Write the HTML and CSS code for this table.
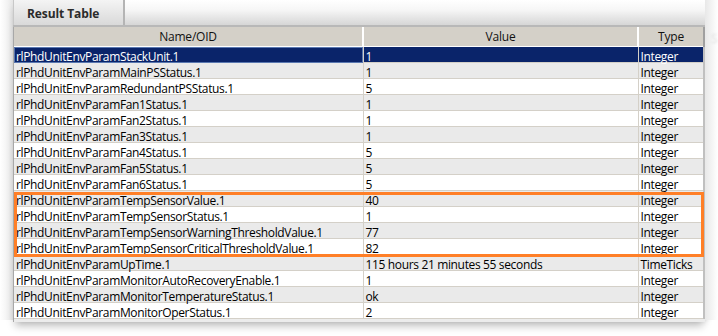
FILE: index.html
```html
<!DOCTYPE html>
<html>
<head>
<meta charset="utf-8">
<link rel="stylesheet" href="styles.css">
</head>
<body>
<div class="stage">
  <div class="left-edge"></div>
  <div class="window">
    <div class="tabbar">
      <div class="tab">Result Table</div>
      <div class="tab-fill"></div>
    </div>
    <div class="grid-wrap">
      <table class="grid">
        <colgroup><col class="c1"><col class="c2"><col class="c3"></colgroup>
        <thead>
          <tr><th>Name/OID</th><th>Value</th><th>Type</th></tr>
        </thead>
        <tbody>
          <tr class="sel"><td class="focus">rlPhdUnitEnvParamStackUnit.1</td><td>1</td><td>Integer</td></tr>
          <tr class="alt"><td>rlPhdUnitEnvParamMainPSStatus.1</td><td>1</td><td>Integer</td></tr>
          <tr><td>rlPhdUnitEnvParamRedundantPSStatus.1</td><td>5</td><td>Integer</td></tr>
          <tr class="alt"><td>rlPhdUnitEnvParamFan1Status.1</td><td>1</td><td>Integer</td></tr>
          <tr><td>rlPhdUnitEnvParamFan2Status.1</td><td>1</td><td>Integer</td></tr>
          <tr class="alt"><td>rlPhdUnitEnvParamFan3Status.1</td><td>1</td><td>Integer</td></tr>
          <tr><td>rlPhdUnitEnvParamFan4Status.1</td><td>5</td><td>Integer</td></tr>
          <tr class="alt"><td>rlPhdUnitEnvParamFan5Status.1</td><td>5</td><td>Integer</td></tr>
          <tr><td>rlPhdUnitEnvParamFan6Status.1</td><td>5</td><td>Integer</td></tr>
          <tr class="alt"><td>rlPhdUnitEnvParamTempSensorValue.1</td><td>40</td><td>Integer</td></tr>
          <tr><td>rlPhdUnitEnvParamTempSensorStatus.1</td><td>1</td><td>Integer</td></tr>
          <tr class="alt"><td>rlPhdUnitEnvParamTempSensorWarningThresholdValue.1</td><td>77</td><td>Integer</td></tr>
          <tr><td>rlPhdUnitEnvParamTempSensorCriticalThresholdValue.1</td><td>82</td><td>Integer</td></tr>
          <tr class="alt"><td>rlPhdUnitEnvParamUpTime.1</td><td>115 hours 21 minutes 55 seconds</td><td>TimeTicks</td></tr>
          <tr><td>rlPhdUnitEnvParamMonitorAutoRecoveryEnable.1</td><td>1</td><td>Integer</td></tr>
          <tr class="alt"><td>rlPhdUnitEnvParamMonitorTemperatureStatus.1</td><td>ok</td><td>Integer</td></tr>
          <tr><td>rlPhdUnitEnvParamMonitorOperStatus.1</td><td>2</td><td>Integer</td></tr>
        </tbody>
      </table>
      <div class="highlight"></div>
    </div>
  </div>
  <div class="right-edge"><span class="ghost">S</span></div>
</div>
</body>
</html>
```
FILE: styles.css
```css
html, body {
  margin: 0;
  padding: 0;
  background: #ffffff;
}
body {
  width: 718px;
  height: 336px;
  overflow: hidden;
  font-family: "Open Sans", "Noto Sans", sans-serif;
}
.stage {
  display: flex;
  width: 718px;
  height: 336px;
}
.left-edge {
  width: 13px;
  height: 320px;
  background: linear-gradient(to right, #ffffff 0%, #f2f2f2 60%, #e6e6e6 100%);
  flex: none;
}
.window {
  width: 692px;
  height: 322px;
  flex: none;
  background: #ececec;
  box-shadow: 0 6px 8px -2px rgba(0,0,0,0.25), 4px 0 6px -2px rgba(0,0,0,0.15);
  display: flex;
  flex-direction: column;
}
.right-edge {
  flex: 1;
  height: 320px;
  background: linear-gradient(to right, #e8e8e8, #ffffff);
  position: relative;
  overflow: hidden;
}
.ghost {
  display: block;
  margin: 30px 0 0 6px;
  color: #e0e0e0;
  font-size: 12px;
  filter: blur(1px);
}
.tabbar {
  display: flex;
  height: 25px;
  flex: none;
  border-bottom: 2px solid #b8b8b8;
}
.tab {
  width: 112px;
  height: 25px;
  box-sizing: border-box;
  padding: 5px 0 0 13px;
  font-size: 12px;
  font-weight: bold;
  color: #2b2b2b;
  background: linear-gradient(to bottom, #f4f4f4, #d9d9d9);
  border-left: 1px solid #c8c8c8;
  border-right: 2px solid #b4b4b4;
  letter-spacing: -0.1px;
}
.tab-fill {
  flex: 1;
  background: linear-gradient(to bottom, #ffffff 0%, #f6f6f6 40%, #d6d6d6 100%);
}
.grid-wrap {
  position: relative;
  flex: 1;
  border-left: 1px solid #a8a8a8;
  background: #ececec;
}
.grid {
  border-collapse: collapse;
  table-layout: fixed;
  width: 690px;
  font-size: 12px;
  letter-spacing: -0.35px;
  color: #000000;
}
.c1 { width: 349px; }
.c2 { width: 275px; }
.c3 { width: 66px; }
.grid th {
  height: 19px;
  padding: 0;
  font-weight: normal;
  background: #d4d0c8;
  border-right: 2px solid #ffffff;
  border-bottom: 1px solid #ffffff;
  color: #111111;
  text-align: center;
  line-height: 19px;
  letter-spacing: -0.2px;
}
.grid th:last-child {
  border-right: 2px solid #a0a0a0;
}
.grid td {
  height: 11px;
  padding: 4px 0 0 2px;
  line-height: 11px;
  vertical-align: top;
  border-right: 1px solid #d4d0c8;
  border-bottom: 1px solid #d4d0c8;
  background: #ffffff;
  white-space: nowrap;
}
.grid td:last-child {
  border-right: 2px solid #c0c0c0;
}
.grid tr.alt td {
  background: #eaeaea;
}
.grid tr.sel td {
  background: #0a246a;
  color: #ffffff;
}
.grid tr.sel td.focus {
  outline: 1px solid #5a78b0;
  outline-offset: -1px;
}
.highlight {
  position: absolute;
  left: 0;
  top: 165px;
  width: 690px;
  height: 65px;
  border: 3px solid #ff7f27;
  box-sizing: border-box;
  pointer-events: none;
}
```
